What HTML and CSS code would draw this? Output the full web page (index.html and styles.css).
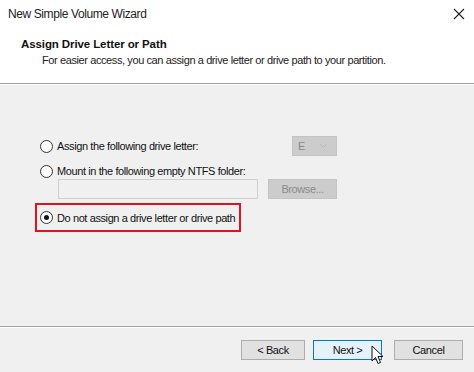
FILE: index.html
```html
<!DOCTYPE html>
<html>
<head>
<meta charset="utf-8">
<link rel="stylesheet" href="styles.css">
</head>
<body>
<div class="window">
  <div class="header">
    <div class="titlebar">
      <span class="title">New Simple Volume Wizard</span>
      <svg class="close" width="12" height="12" viewBox="0 0 12 12"><path d="M1 1L11 11M11 1L1 11" stroke="#222" stroke-width="1.1" fill="none"/></svg>
    </div>
    <div class="heading">Assign Drive Letter or Path</div>
    <div class="subheading">For easier access, you can assign a drive letter or drive path to your partition.</div>
  </div>
  <div class="content">
    <div class="row r1">
      <label class="radio"><span class="dot"></span>Assign the following drive letter:</label>
      <div class="combo"><span>E</span><svg width="9" height="6" viewBox="0 0 9 6"><path d="M1 1L4.5 4.5L8 1" stroke="#b8b8b8" stroke-width="1" fill="none"/></svg></div>
    </div>
    <div class="row r2">
      <label class="radio"><span class="dot"></span>Mount in the following empty NTFS folder:</label>
    </div>
    <div class="row r3">
      <div class="input"></div>
      <div class="btn disabled browse">Browse...</div>
    </div>
    <div class="highlight">
      <label class="radio"><span class="dot checked"></span>Do not assign a drive letter or drive path</label>
    </div>
  </div>
  <div class="footer">
    <div class="btn back">&lt; Back</div>
    <div class="btn next">Next &gt;
      <svg class="cursor" width="14" height="21" viewBox="0 0 14 21"><path d="M1 1L1 16L4.5 12.5L7 18.5L9.5 17.5L7 11.5L12 11.5Z" fill="#fff" stroke="#111" stroke-width="1"/></svg>
    </div>
    <div class="btn cancel">Cancel</div>
  </div>
</div>
</body>
</html>
```
FILE: styles.css
```css
html, body {
  margin: 0;
  padding: 0;
}
body {
  width: 474px;
  height: 372px;
  overflow: hidden;
  font-family: "Liberation Sans", Arial, sans-serif;
  font-size: 11px;
  letter-spacing: -0.4px;
  color: #111;
}
.window {
  width: 474px;
  height: 372px;
  display: flex;
  flex-direction: column;
  background: #f0f0f0;
}
.header {
  background: #fff;
  height: 84px;
  box-sizing: border-box;
  border-bottom: 1px solid #a0a0a0;
  box-shadow: 0 1px 0 #fff;
}
.titlebar {
  height: 28px;
  display: flex;
  align-items: center;
  justify-content: space-between;
  padding: 0 8px 0 8px;
}
.title {
  font-size: 12px;
  letter-spacing: -0.4px;
  color: #222;
}
.close {
  margin-right: 1px;
}
.heading {
  margin-left: 21px;
  margin-top: 9px;
  font-weight: bold;
  font-size: 11.5px;
  letter-spacing: -0.1px;
  line-height: 15px;
}
.subheading {
  margin-left: 42px;
  line-height: 16px;
  color: #222;
}
.content {
  height: 242px;
  box-sizing: border-box;
  border-bottom: 1px solid #a0a0a0;
  box-shadow: 0 1px 0 #fff;
  padding-top: 51px;
  padding-left: 40px;
  margin-top: 1px;
}
.row {
  display: flex;
  align-items: center;
}
.r1 {
  height: 20px;
  justify-content: space-between;
  width: 297px;
}
.r2 {
  height: 16px;
  margin-top: 7px;
}
.r3 {
  margin-top: 0;
  margin-left: 18px;
  gap: 10px;
}
.radio {
  display: flex;
  align-items: center;
  gap: 4px;
  white-space: nowrap;
}
.dot {
  width: 11px;
  height: 11px;
  flex: none;
  border: 1px solid #333;
  border-radius: 50%;
  background: #fff;
  position: relative;
}
.dot.checked::after {
  content: "";
  position: absolute;
  left: 3px;
  top: 3px;
  width: 5px;
  height: 5px;
  border-radius: 50%;
  background: #111;
}
.combo {
  width: 45px;
  height: 20px;
  box-sizing: border-box;
  background: #cccccc;
  border: 1px solid #c4c4c4;
  display: flex;
  align-items: center;
  justify-content: space-between;
  padding: 0 8px 0 5px;
  color: #8a8a8a;
}
.input {
  width: 200px;
  height: 20px;
  box-sizing: border-box;
  background: #f0f0f0;
  border: 1px solid #cfcfcf;
}
.btn {
  height: 20px;
  box-sizing: border-box;
  display: flex;
  align-items: center;
  justify-content: center;
  border: 1px solid #adadad;
  background: #e1e1e1;
}
.disabled {
  background: #cccccc;
  border-color: #c4c4c4;
  color: #8a8a8a;
}
.browse {
  width: 69px;
}
.highlight {
  margin-top: 4px;
  margin-left: -5px;
  width: 206px;
  height: 29px;
  box-sizing: border-box;
  border: 2.5px solid #e0141e;
  display: flex;
  align-items: center;
  padding-left: 3px;
}
.footer {
  flex: 1;
  display: flex;
  align-items: flex-start;
  padding-top: 13px;
  padding-left: 241px;
}
.back {
  width: 64px;
}
.next {
  width: 69px;
  margin-left: 8px;
  background: #e5f1fb;
  border-color: #0078d7;
  position: relative;
}
.cursor {
  position: absolute;
  left: 57px;
  top: 4px;
}
.cancel {
  width: 69px;
  margin-left: 12px;
}
```
